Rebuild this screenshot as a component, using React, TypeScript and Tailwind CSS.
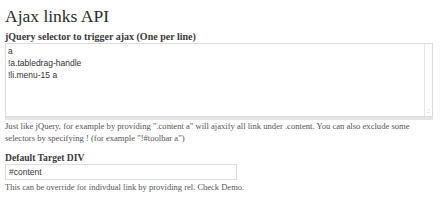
import React from "react";

export default function App() {
  return (
    <div className="w-[440px] h-[200px] overflow-hidden bg-white px-[5px] font-['Liberation_Serif',serif] text-[#333]">
      {/* Page title */}
      <h1 className="pt-[6px] text-[17.5px] leading-[20px] text-[#2b2b2b]">Ajax links API</h1>

      {/* Selector textarea */}
      <div className="mt-[5px]">
        <label className="block text-[10px] font-bold leading-[12px] text-[#3a3a3a]">
          jQuery selector to trigger ajax (One per line)
        </label>
        <div className="w-[428px]">
          <div className="relative h-[74px] border border-[#dcdcdc] pl-[2px] pt-[1px] font-['Liberation_Sans',sans-serif] text-[8.5px] leading-[12px] text-[#333]">
            <div>a</div>
            <div>!a.tabledrag-handle</div>
            <div>!li.menu-15 a</div>
            <div className="absolute right-0 top-0 bottom-0 w-[8px] border-l border-[#e8e8e8]" />
            <span className="absolute right-[2px] bottom-[2px] text-[7px] leading-none text-[#aaa]">.:</span>
          </div>
          <div className="h-[3px] bg-[#e6e6e6]" />
        </div>
        <p className="text-[8.6px] leading-[12px] text-[#555]">
          Just like jQuery, for example by providing ".content a" will ajaxify all link under .content. You can also exclude some
          <br />
          selectors by specifying ! (for example "!#toolbar a")
        </p>
      </div>

      {/* Default target */}
      <div className="mt-[8px]">
        <label className="block text-[9.6px] font-bold leading-[12px] text-[#3a3a3a]">Default Target DIV</label>
        <div className="flex h-[16px] w-[232px] items-center border border-[#dcdcdc] pl-[3px] font-['Liberation_Sans',sans-serif] text-[8.5px] text-[#333]">
          #content
        </div>
        <p className="mt-[1px] text-[8.5px] leading-[12px] text-[#555]">
          This can be override for indivdual link by providing rel. Check Demo.
        </p>
      </div>
    </div>
  );
}
